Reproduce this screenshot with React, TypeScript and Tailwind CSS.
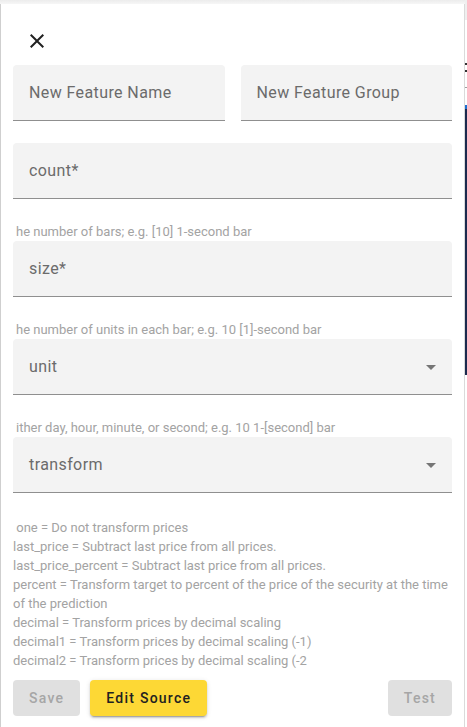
import React from "react";

const font = { fontFamily: "Roboto, 'Liberation Sans', sans-serif" };

function CloseIcon() {
  return (
    <svg viewBox="0 0 24 24" className="h-6 w-6 fill-[#212121]">
      <path d="M19 6.41 17.59 5 12 10.59 6.41 5 5 6.41 10.59 12 5 17.59 6.41 19 12 13.41 17.59 19 19 17.59 13.41 12z" />
    </svg>
  );
}

function Field({ label, select = false, className = "" }: { label: string; select?: boolean; className?: string }) {
  return (
    <div
      className={`relative flex h-[56px] items-center rounded-t-[4px] border-b border-[#8f8f8f] bg-[#f3f3f3] pl-4 pr-3 pt-px ${className}`}
    >
      <span className="text-[16px] leading-none tracking-[0.4px] text-[#6b6b6b]">{label}</span>
      {select ? (
        <svg viewBox="0 0 24 24" className="absolute right-[9px] top-1/2 h-6 w-6 -translate-y-1/2 fill-[#757575]">
          <path d="M7 10l5 5 5-5z" />
        </svg>
      ) : null}
    </div>
  );
}

function Helper({ children }: { children: React.ReactNode }) {
  return <p className="mb-[2px] mt-[26px] h-[14px] pl-[3px] text-[13px] leading-[14px] text-[#a3a3a3]">{children}</p>;
}

const transformNotes = [
  "\u00a0one = Do not transform prices",
  "last_price = Subtract last price from all prices.",
  "last_price_percent = Subtract last price from all prices.",
  "percent = Transform target to percent of the price of the security at the time",
  "of the prediction",
  "decimal = Transform prices by decimal scaling",
  "decimal1 = Transform prices by decimal scaling (-1)",
  "decimal2 = Transform prices by decimal scaling (-2",
];

export default function App() {
  return (
    <div className="flex h-[727px] w-[467px] overflow-hidden bg-white" style={font}>
      <div className="flex w-[465px] flex-col">
        <div className="h-[4px] bg-gradient-to-b from-[#ececec] to-[#f6f6f6]" />
        <div className="flex flex-1 flex-col border-l border-r border-l-[#cfcfcf] border-r-[#dadada] bg-white px-[12px] pt-[13px]">
          <button className="flex h-12 w-12 items-center justify-center rounded-full">
            <CloseIcon />
          </button>

          <div className="grid grid-cols-2 gap-4">
            <Field label="New Feature Name" />
            <Field label="New Feature Group" />
          </div>

          <Field label="count*" className="mt-[22px]" />
          <Helper>he number of bars; e.g. [10] 1-second bar</Helper>
          <Field label="size*" />
          <Helper>he number of units in each bar; e.g. 10 [1]-second bar</Helper>
          <Field label="unit" select />
          <Helper>ither day, hour, minute, or second; e.g. 10 1-[second] bar</Helper>
          <Field label="transform" select />

          <div className="mt-[25px] text-[13px] leading-[19px] text-[#a3a3a3]">
            {transformNotes.map((line) => (
              <p key={line} className="whitespace-nowrap">
                {line}
              </p>
            ))}
          </div>

          <div className="mt-[10px] flex items-center">
            <button className="h-9 rounded-[4px] bg-[#e0e0e0] px-4 text-[14px] font-medium tracking-[1.25px] text-[#a6a6a6]">
              Save
            </button>
            <button className="ml-[10px] h-9 rounded-[4px] bg-[#fdd835] px-4 text-[14px] font-medium tracking-[1.25px] text-[#212121] shadow-[0_3px_1px_-2px_rgba(0,0,0,0.2),0_2px_2px_0_rgba(0,0,0,0.14),0_1px_5px_0_rgba(0,0,0,0.12)]">
              Edit Source
            </button>
            <button className="ml-auto h-9 rounded-[4px] bg-[#e0e0e0] px-4 text-[14px] font-medium tracking-[1.25px] text-[#a6a6a6]">
              Test
            </button>
          </div>
        </div>
      </div>

      {/* page behind the drawer */}
      <div className="flex w-[2px] flex-col">
        <div className="h-[20px] bg-[#efefef]" />
        <div className="h-[43px] bg-white" />
        <div className="h-[2px] bg-[#333]" />
        <div className="h-[5px] bg-white" />
        <div className="h-[2px] bg-[#333]" />
        <div className="h-[15px] bg-white" />
        <div className="h-px bg-[#9e9e9e]" />
        <div className="h-[17px] bg-white" />
        <div className="h-[4px] bg-[#1e6fd0]" />
        <div className="h-[266px] bg-[#1b2a4e]" />
        <div className="flex-1 bg-white" />
      </div>
    </div>
  );
}
